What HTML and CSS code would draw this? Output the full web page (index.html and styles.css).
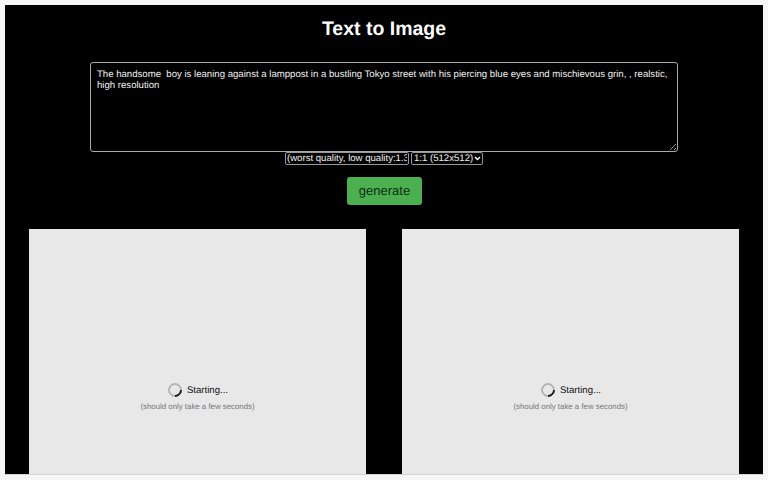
FILE: index.html
```html
<!DOCTYPE html>
<html lang="en">
<head>
<meta charset="utf-8">
<title>Text to Image</title>
<link rel="stylesheet" href="styles.css">
</head>
<body>
<main class="app">
  <h1 class="title">Text to Image</h1>
  <div class="prompt-row">
    <textarea class="prompt" spellcheck="false">The handsome  boy is leaning against a lamppost in a bustling Tokyo street with his piercing blue eyes and mischievous grin, , realstic, high resolution</textarea>
  </div>
  <div class="options">
    <input class="negative" type="text" value="(worst quality, low quality:1.3), blurry">
    <select class="ratio"><option>1:1 (512x512)</option></select>
  </div>
  <div class="actions"><button class="generate" type="button">generate</button></div>
  <div class="results">
    <section class="card">
      <div class="status"><span class="spinner"></span><span class="status-text">Starting...</span></div>
      <p class="hint">(should only take a few seconds)</p>
    </section>
    <section class="card">
      <div class="status"><span class="spinner"></span><span class="status-text">Starting...</span></div>
      <p class="hint">(should only take a few seconds)</p>
    </section>
  </div>
</main>
</body>
</html>
```
FILE: styles.css
```css
html, body {
  margin: 0;
  height: 480px;
  overflow: hidden;
}
body {
  background: #f6f6f6;
  padding: 5px 5px 0;
  box-sizing: border-box;
  font-family: "Liberation Sans", Arial, sans-serif;
  text-rendering: geometricPrecision;
}
.app {
  width: 758px;
  height: 469px;
  background: #000;
  color: #fff;
  overflow: hidden;
  border-bottom: 1px solid #d4d4d4;
  box-sizing: content-box;
}
.title {
  margin: 0;
  padding-top: 13px;
  height: 44px;
  box-sizing: content-box;
  font-size: 19.5px;
  line-height: 23px;
  font-weight: 700;
  text-align: center;
}
.prompt-row {
  display: flex;
  justify-content: center;
}
.prompt {
  display: block;
  width: 588px;
  height: 90px;
  box-sizing: border-box;
  margin: 0;
  padding: 6px 6px 4px;
  background: #000;
  color: #f0f0f0;
  border: 1px solid #aaa;
  border-radius: 3px;
  font-family: "Liberation Sans", Arial, sans-serif;
  font-size: 9.6px;
  line-height: 11px;
  text-rendering: geometricPrecision;
  outline: none;
}
.options {
  display: flex;
  justify-content: center;
  gap: 2px;
  height: 12px;
}
.negative, .ratio {
  box-sizing: border-box;
  height: 13px;
  margin: 0;
  background-color: #000;
  color: #f0f0f0;
  border: 1px solid #999;
  border-radius: 2px;
  font-family: "Liberation Sans", Arial, sans-serif;
  font-size: 9.6px;
  line-height: 11px;
  text-rendering: geometricPrecision;
}
.negative {
  width: 124px;
  padding: 0 1px;
}
.ratio {
  width: 72px;
  padding: 0 0 0 2px;
  appearance: none;
  background-image: url("data:image/svg+xml,%3Csvg xmlns='http://www.w3.org/2000/svg' width='7' height='5'%3E%3Cpath d='M1 1l2.5 2.5L6 1' fill='none' stroke='%23fff' stroke-width='1.4'/%3E%3C/svg%3E");
  background-repeat: no-repeat;
  background-position: right 1px center;
}
.actions {
  display: flex;
  justify-content: center;
  padding-top: 13px;
  padding-left: 1px;
}
.generate {
  width: 75px;
  height: 28px;
  padding: 0 0 2px;
  border: 0;
  border-radius: 3px;
  background: #4caf50;
  color: #0d2e10;
  font-family: "Liberation Sans", Arial, sans-serif;
  font-size: 13px;
  text-rendering: geometricPrecision;
}
.results {
  display: flex;
  gap: 36px;
  padding: 24px 0 0 24px;
}
.card {
  width: 337px;
  height: 245px;
  flex: none;
  background: #e8e8e8;
  color: #111;
  display: flex;
  flex-direction: column;
  align-items: center;
  padding-top: 154px;
  box-sizing: border-box;
}
.status {
  display: flex;
  align-items: center;
  gap: 5px;
  height: 14px;
  font-size: 9.6px;
  padding-left: 1px;
}
.spinner {
  width: 14px;
  height: 14px;
  box-sizing: border-box;
  border-radius: 50%;
  border: 2px solid #b4b4b4;
  border-right-color: #222;
  transform: rotate(45deg);
}
.hint {
  margin: 5px 0 0;
  font-size: 7.85px;
  line-height: 10px;
  color: #777;
}
```
